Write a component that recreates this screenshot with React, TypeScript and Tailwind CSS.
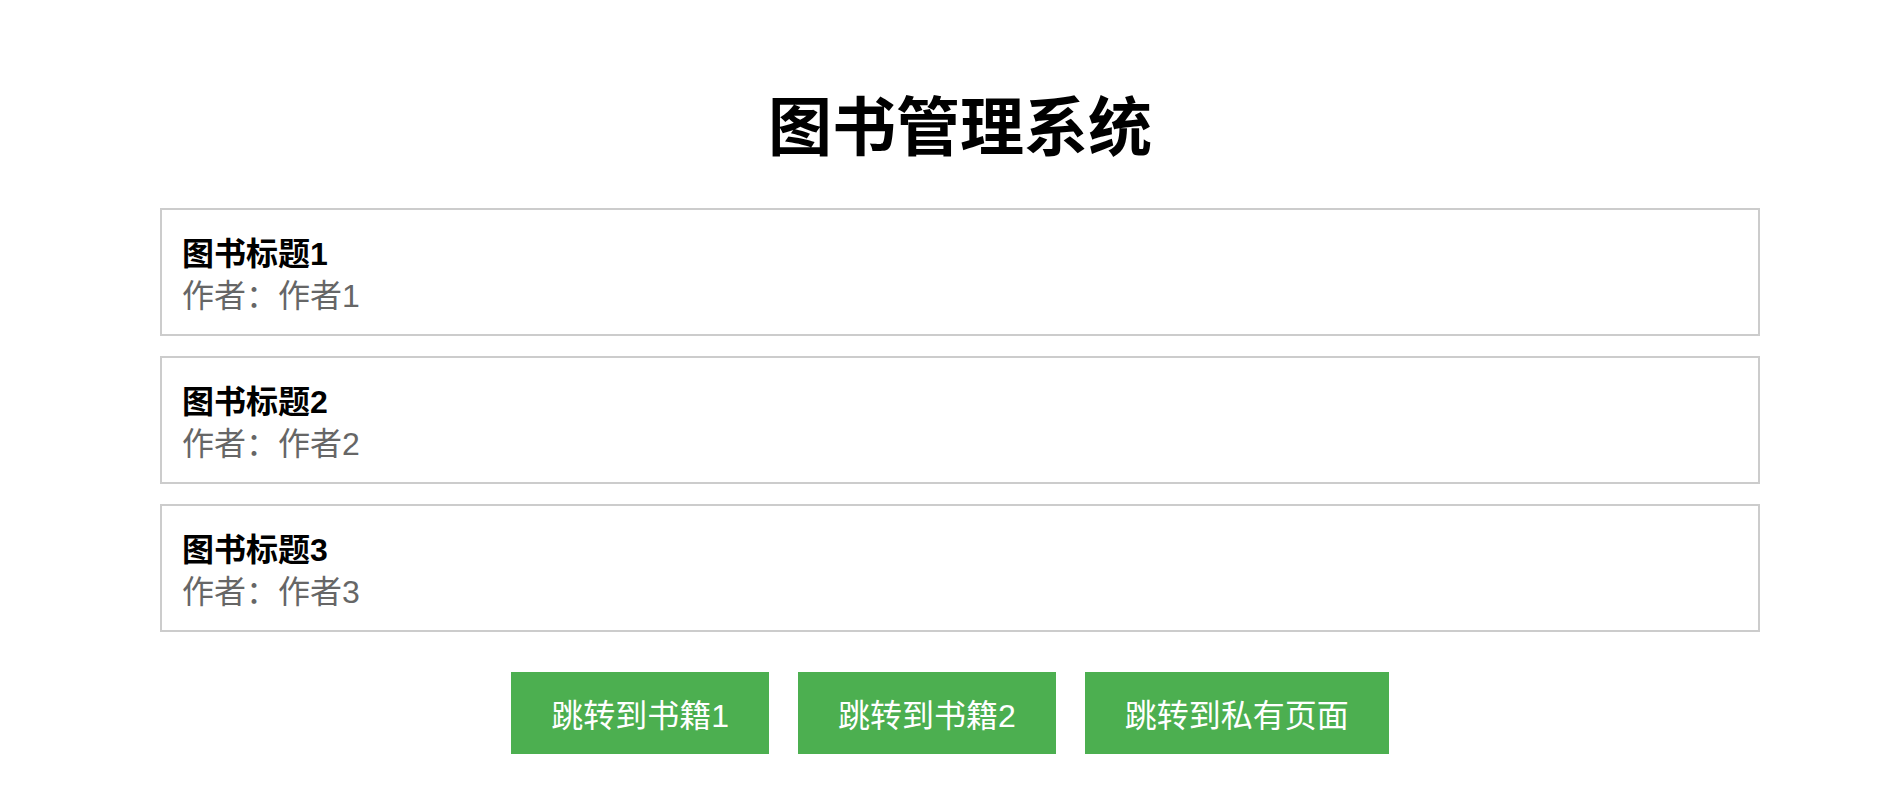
const books = [
  { id: 1, title: "图书标题1", author: "作者1" },
  { id: 2, title: "图书标题2", author: "作者2" },
  { id: 3, title: "图书标题3", author: "作者3" },
];

const links = ["跳转到书籍1", "跳转到书籍2", "跳转到私有页面"];

export default function App() {
  return (
    <div className="min-h-screen bg-white font-['Liberation_Sans','Noto_Sans_CJK_SC',sans-serif] text-black">
      <div className="ml-[160px] w-[1600px] pt-[86px]">
        <h1 className="mb-[38px] text-center text-[64px] leading-[84px] font-bold">图书管理系统</h1>

        {/* book list */}
        <div className="flex flex-col gap-[20px]">
          {books.map((b) => (
            <div key={b.id} className="border-2 border-[#cccccc] px-[20px] pt-[23px] pb-[17px]">
              <div className="text-[32px] leading-[42px] font-bold">{b.title}</div>
              <div className="text-[32px] leading-[42px] text-[#666666]">作者：{b.author}</div>
            </div>
          ))}
        </div>
      </div>

      <div className="mt-[40px] flex justify-center gap-[29px] pr-[3px]">
        {links.map((l) => (
          <button
            key={l}
            className="bg-[#4caf50] px-[40px] pt-[23px] pb-[17px] text-[32px] leading-[42px] text-white"
          >
            {l}
          </button>
        ))}
      </div>
    </div>
  );
}
